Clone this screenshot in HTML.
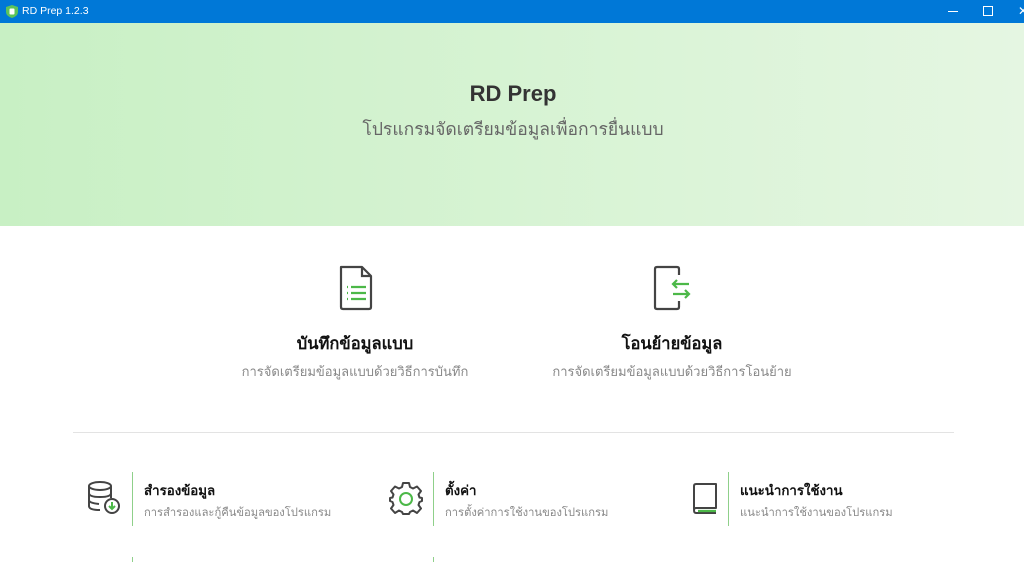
<!DOCTYPE html>
<html><head><meta charset="utf-8"><style>
body{margin:0;width:1024px;height:562px;overflow:hidden;background:#fff;font-family:"Liberation Sans","Noto Sans CJK SC",sans-serif;position:relative}
.tb{position:absolute;left:0;top:0;width:1024px;height:23px;background:#0078d7;color:#fff;font-size:10.5px}
.hdr{position:absolute;left:0;top:23px;width:1024px;height:203px;background:linear-gradient(90deg,#c8f0c4,#e5f6e2)}
.a{position:absolute;white-space:nowrap}
.c{text-align:center;transform:translateX(-50%)}
.vl{position:absolute;width:1px;background:#8fd08a}
</style></head><body>
<div class="tb">
<svg style="position:absolute;left:6px;top:5px" width="12" height="13"><path d="M6 0L12 2V7Q12 11 6 13Q0 11 0 7V2Z" fill="#5cc35a"/><rect x="3.5" y="3.5" width="5" height="6" fill="#fff" rx="1"/></svg>
<span class="a" style="left:22px;top:5px">RD Prep 1.2.3</span>
<div class="a" style="left:948px;top:11px;width:10px;height:1px;background:#fff"></div>
<div class="a" style="left:983px;top:6px;width:8px;height:8px;border:1px solid #fff"></div>
<span class="a" style="left:1018px;top:4px;font-size:12px">✕</span>
</div>
<div class="hdr"></div>
<div class="a c" style="left:513px;top:81px;font-size:22px;font-weight:bold;color:#333">RD Prep</div>
<div class="a c" style="left:513px;top:115px;font-size:17.5px;color:#666">โปรแกรมจัดเตรียมข้อมูลเพื่อการยื่นแบบ</div>

<svg class="a" style="left:338px;top:265px" width="36" height="46" fill="none" stroke="#444" stroke-width="2.2"><path d="M3 2H24L33 11V42Q33 44 31 44H5Q3 44 3 42Z" stroke-linejoin="round"/><path d="M24 2V11H33"/><g stroke="#4cb848"><path d="M13 22H28M13 28H28M13 34H28"/><path d="M9 22H10M9 28H10M9 34H10"/></g></svg>
<div class="a c" style="left:355px;top:331px;font-size:16.5px;font-weight:bold;color:#111">บันทึกข้อมูลแบบ</div>
<div class="a c" style="left:355px;top:361px;font-size:13px;color:#888">การจัดเตรียมข้อมูลแบบด้วยวิธีการบันทึก</div>

<svg class="a" style="left:653px;top:265px" width="40" height="46" fill="none" stroke="#444" stroke-width="2.2"><path d="M26 10V4Q26 2 24 2H4Q2 2 2 4V42Q2 44 4 44H24Q26 44 26 42V36" stroke-linejoin="round"/><g stroke="#4cb848"><path d="M20 19H36M24 15L20 19L24 23"/><path d="M20 29H36M32 25L36 29L32 33"/></g></svg>
<div class="a c" style="left:672px;top:331px;font-size:16.5px;font-weight:bold;color:#111">โอนย้ายข้อมูล</div>
<div class="a c" style="left:672px;top:361px;font-size:13px;color:#888">การจัดเตรียมข้อมูลแบบด้วยวิธีการโอนย้าย</div>

<div class="a" style="left:73px;top:432px;width:881px;height:1px;background:#e3e3e3"></div>

<svg class="a" style="left:87px;top:481px" width="36" height="36" fill="none" stroke="#444" stroke-width="2"><ellipse cx="13" cy="5" rx="11" ry="4"/><path d="M2 5V25Q2 29 13 29M24 5V17M2 12Q2 16 13 16Q24 16 24 12M2 19Q2 22 12 23"/><circle cx="25" cy="25" r="7"/><path d="M25 21V28M22 25L25 28L28 25" stroke="#4cb848"/></svg>
<div class="vl" style="left:132px;top:472px;height:54px"></div><div class="vl" style="left:132px;top:557px;height:5px"></div>
<div class="a" style="left:144px;top:480px;font-size:13.3px;font-weight:bold;color:#111">สำรองข้อมูล</div>
<div class="a" style="left:144px;top:503px;font-size:11.2px;color:#888">การสำรองและกู้คืนข้อมูลของโปรแกรม</div>

<svg class="a" style="left:389px;top:481px" width="34" height="34" fill="none" stroke="#444" stroke-width="2"><path d="M14 2H20L21 6L24 7.5L28 5.5L32 10L29.5 13.5L30.5 16.5L33 17V20L30.5 21L29.5 24L32 27.5L28 32L24 29.5L21 31L20 33H14L13 31L10 29.5L6 32L2 27.5L4.5 24L3.5 21L1 20V17L3.5 16.5L4.5 13.5L2 10L6 5.5L10 7.5L13 6Z" stroke-linejoin="round"/><circle cx="17" cy="18" r="6" stroke="#4cb848"/></svg>
<div class="vl" style="left:433px;top:472px;height:54px"></div><div class="vl" style="left:433px;top:557px;height:5px"></div>
<div class="a" style="left:445px;top:480px;font-size:13.3px;font-weight:bold;color:#111">ตั้งค่า</div>
<div class="a" style="left:445px;top:503px;font-size:11.2px;color:#888">การตั้งค่าการใช้งานของโปรแกรม</div>

<svg class="a" style="left:690px;top:482px" width="30" height="34" fill="none" stroke="#444" stroke-width="2"><path d="M4 27V4Q4 2 6 2H26V26H6Q4 26 4 28Q4 31 6 31H26" stroke-linejoin="round"/><path d="M8 29H26" stroke="#4cb848" stroke-width="2.2"/></svg>
<div class="vl" style="left:728px;top:472px;height:54px"></div>
<div class="a" style="left:740px;top:480px;font-size:13.3px;font-weight:bold;color:#111">แนะนำการใช้งาน</div>
<div class="a" style="left:740px;top:503px;font-size:11.2px;color:#888">แนะนำการใช้งานของโปรแกรม</div>
</body></html>
